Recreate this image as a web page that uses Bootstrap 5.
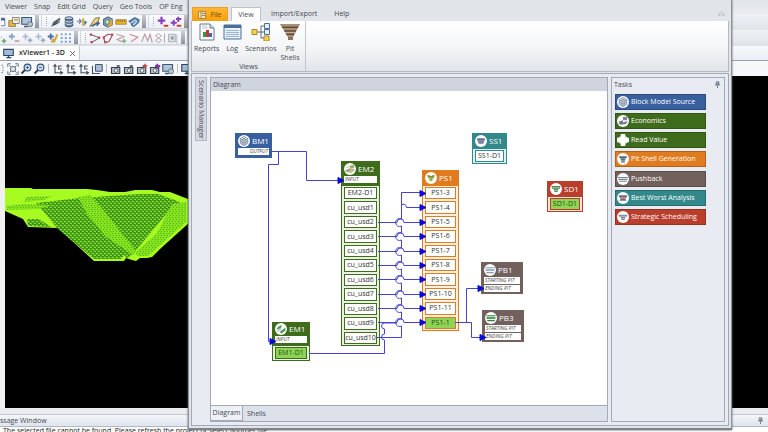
<!DOCTYPE html>
<html lang="en">
<head>
<meta charset="utf-8">
<meta name="viewport" content="width=device-width, initial-scale=1">
<title>Scenario diagram</title>
<link href="https://cdn.jsdelivr.net/npm/bootstrap@5.3.0/dist/css/bootstrap.min.css" rel="stylesheet">
<style>
:root { --line:#a3a9b8; --panel:#e8ebf1; --shell:#e1e4e8; }
body { font-family:"Open Sans","Noto Sans",sans-serif; font-size:7px; line-height:10px; color:#454a52; background:#fff; }
button { font:inherit; color:inherit; border:0; background:none; padding:0; white-space:nowrap; }
svg { display:block; flex:none; }
.desk { height:100vh; }

/* main application */
.menus { height:14px; background:linear-gradient(#e2e5e9,#eaecef); padding-left:5px; gap:7px; }
.strip { height:16px; background:linear-gradient(#f0f2f4,#dfe3e8); }
.tools { height:15px; padding:0 2px 0 1px; gap:1px; background:linear-gradient(#fbfcfd,#eceff4); border:1px solid #d3d7dd; border-left:0; }
.tools svg, .viewtools svg { width:12px; height:12px; }
.tools .cut, .viewtools .cut { width:6px; }
.grip { width:4px; height:100%; background:linear-gradient(#c9cdd3,#8e949d); margin-left:1px; }
.dots { width:3px; border-left:1px dotted #a3a9b3; height:9px; margin-left:3px; }
.filetabs { height:15px; background:linear-gradient(#f7f9fc,#e9eef5); border-bottom:1px solid #9ca2ab; }
.filetab { width:80px; background:#fff; border-right:1px solid #c4c9d2; color:#1c1f25; font-weight:600; padding-left:3px; gap:5px; }
.viewtools { height:15px; background:#f6f7f9; gap:1px; }
.bar { width:1px; height:9px; background:#b7bcc5; margin:0 2px; }
.scene { background:#000; border-left:5px solid #f0f0f0; padding-top:109px; }
.msghead { height:13px; margin-top:6px; background:linear-gradient(#f3f6fa,#dfe5ee); border-top:1px solid #c2c7cf; border-bottom:1px solid #b2b7c1; padding-right:4px; }
.msgs { height:5px; background:#fff; color:#222; line-height:7px; padding-left:3px; }
.under { background:#e9ebee; }

/* planning window */
.win { position:absolute; left:188px; right:36px; top:0; bottom:2px; background:var(--shell); border:1px solid #8d929c; border-top:0; border-bottom:2px solid #7f838b; box-shadow:0 0 2px #555; padding:7px 2px 2px; }
.rtabs { height:14px; padding-left:1px; }
.rtab { height:14px; text-align:center; }
.rfile { width:36px; background:linear-gradient(#ffb62e,#f99f0b); border:1px solid #e8a02a; border-bottom:0; gap:4px; color:#6a4a10; }
.rview { width:30px; background:#fff; border:1px solid #bcc1ca; border-bottom:0; margin-left:3px; }
.rplain { margin-left:10px; }
.rlast { margin-left:17px; }
.ribbon { height:51px; background:linear-gradient(#fff,#f5f6f8 50%,#e2e5e9); border:1px solid #b3b8c2; border-top:0; }
.rgroup { width:114px; border-right:1px solid #c3c8d0; padding-top:2px; }
.ritems { padding:0 5px 0 2px; }
.ritem { line-height:9px; }
.ritem svg { margin-bottom:3px; }
.work { background:var(--panel); border:1px solid var(--line); margin-top:1px; padding:3px; gap:3px; }
.sidetab { width:12px; height:64px; writing-mode:vertical-rl; background:#d5d9e2; border:1px solid #b0b6c2; text-align:center; line-height:10px; }
.pane { border:1px solid var(--line); }
.phead { height:13px; background:#cfd4de; padding:0 3px 0 2px; }
.board { background:#fff; position:relative; overflow:hidden; }
.btabs { height:16px; background:#dde1ea; border-top:1px solid var(--line); }
.btab { height:15px; width:32px; background:#eef0f5; border-right:1px solid var(--line); border-bottom:1px solid var(--line); }
.taskpane { width:114px; background:var(--panel); }
.taskpane .phead { background:transparent; }
.tasklist { width:91px; height:131px; margin:3px 0 0 3px; }
.task { height:16px; color:#fff; text-align:left; gap:2px; padding-left:1px; border:1px solid #0003; }
.task svg { width:12px; height:12px; }

.c-blue { --c:#38609f; --l:#dfe8f5; } .c-green { --c:#3f6b1c; --l:#e9f0df; } .c-orange { --c:#e07b20; --l:#fdf0e0; }
.c-brown { --c:#71605b; --l:#eee; } .c-teal { --c:#32888a; --l:#dff0f0; } .c-red { --c:#b93e2c; --l:#f6e1dd; }
.task, .node { background:var(--c); }

/* diagram nodes */
.node { position:absolute; color:#fff; font-size:8px; }
.ntitle { height:15px; padding-left:3px; gap:2px; }
.ntitle svg { width:12px; height:12px; }
.port { height:7px; margin:0 3px; background:#fff; color:#444; font-size:5px; line-height:7px; font-style:italic; padding:0 1px; }
.port + .port { margin-top:1px; }
.slots { background:var(--l); border:1px solid var(--c); padding:1px 2px; gap:2px; }
.port + .slots { margin-top:2px; }
.slot { flex:1 1 0; min-height:0; background:#fff; border:1px solid var(--c); color:#333; font-size:7px; line-height:10px; white-space:nowrap; display:flex; align-items:center; justify-content:center; }
.slot.on { background:#8dd455; color:#234d12; }
#bm1 { left:24px; top:42px; width:37px; height:25px; }
#em2 { left:130px; top:70px; width:39px; height:185px; }
#ps1 { left:211px; top:79px; width:37px; height:161px; }
#ss1 { left:261px; top:42px; width:35px; height:31px; }
#sd1 { left:336px; top:90px; width:36px; height:31px; }
#pb1 { left:270px; top:171px; width:42px; height:32px; }
#pb3 { left:271px; top:219px; width:42px; height:32px; }
#em1 { left:61px; top:231px; width:38px; height:39px; }
.wires { position:absolute; left:0; top:0; }
</style>
<script src="https://cdn.jsdelivr.net/npm/bootstrap@5.3.0/dist/js/bootstrap.bundle.min.js"></script>
</head>
<body class="overflow-hidden">
<svg width="0" height="0" class="position-absolute" aria-hidden="true">
  <defs>
    <g id="disc"><circle cx="8" cy="8" r="8" fill="#fff"/></g>
    <symbol id="i-block" viewBox="0 0 16 16"><use href="#disc"/><g fill="none" stroke="#78899f" stroke-width="1.2"><path d="M8 2l5 3v6l-5 3-5-3V5zM3 5l5 3 5-3M8 8v6M5.500 3.500l5 3v6M10.500 3.500l-5 3v6M3 8l5 3 5-3"/></g></symbol>
    <symbol id="i-eco" viewBox="0 0 16 16"><use href="#disc"/><path d="M1.500 9.500l6-2.500 2 2-5 4zM7 4l6-2 1 4-5 2z" fill="#a3ab74"/><path d="M6 11l6-3 2 1-5 4zM3 6l4-1" fill="#cfc894" stroke="#8a9760" stroke-width=".8"/></symbol>
    <symbol id="i-eco2" viewBox="0 0 16 16"><use href="#disc"/><path d="M2 9c1-4 4-6 7-6l-1 4zM6 12l8-6v4l-5 4z" fill="#4d9a59"/><path d="M3 11l5-3" stroke="#789"/></symbol>
    <symbol id="i-eco3" viewBox="0 0 16 16"><use href="#disc"/><path d="M8 2.500h5.500V7H8z" fill="#888097"/><path d="M2 9l6-2v3l6-2-2 4-8 1z" fill="#77758a"/></symbol>
    <symbol id="i-read" viewBox="0 0 16 16"><circle cx="8" cy="8" r="6.500" fill="#fff"/><path d="M5 0h6v16H5zM0 5h16v6H0z" fill="#fff"/><path d="M3 3l2 1M13 3l-2 1M3 13l2-1M13 13l-2-1" stroke="#3f6b1c"/></symbol>
    <symbol id="i-pit" viewBox="0 0 16 16"><use href="#disc"/><path d="M2.500 4h11l-3 5v4h-5V9z" fill="#85919b"/><path d="M3 6h10M5 8.500h6" stroke="#465a6d"/></symbol>
    <symbol id="i-pitg" viewBox="0 0 16 16"><use href="#disc"/><path d="M3 4h3l2 2 2-2h3l-1 4-2 1v3H6V9L4 8z" fill="#9dab48"/><path d="M4 6h8" stroke="#6e8634"/></symbol>
    <symbol id="i-push" viewBox="0 0 16 16"><use href="#disc"/><path d="M1 6h14M2 8.500h12M3 11h10" stroke="#76838e" stroke-width="1.400"/></symbol>
    <symbol id="i-pushg" viewBox="0 0 16 16"><use href="#disc"/><path d="M2 5h12M3 11.500h10" stroke="#46724c" stroke-width="1.500"/><path d="M2 6.500h12v3H2z" fill="#4ea458"/></symbol>
    <symbol id="i-pushb" viewBox="0 0 16 16"><use href="#disc"/><path d="M2 5h12M3 11.500h10" stroke="#8c9caf" stroke-width="1.500"/><path d="M2 6.500h12v3H2z" fill="#9fb6d2"/></symbol>
    <symbol id="i-best" viewBox="0 0 16 16"><use href="#disc"/><path d="M2.500 4h11v3l-2 1 1 4h-9l1-4-2-1z" fill="#8b96a2"/><path d="M3 6h10M5 10h6" stroke="#9c4240"/></symbol>
    <symbol id="i-bestg" viewBox="0 0 16 16"><use href="#disc"/><path d="M3 4h10v3l-2 5H5L3 7z" fill="#8b92ad"/><path d="M3 6h10M5 9h6" stroke="#5b648a"/></symbol>
    <symbol id="i-strat" viewBox="0 0 16 16"><use href="#disc"/><path d="M2 5h12l-1 3h-2l-1 4H6L5 8H3z" fill="#71808c"/><path d="M3 7h10M6 10h4" stroke="#dde"/></symbol>
    <symbol id="i-stratg" viewBox="0 0 16 16"><use href="#disc"/><path d="M2 4h12l-1 4h-2l-1 4H6L5 8H3z" fill="#518b50"/><path d="M3 6.500h10M6 10h4" stroke="#dde"/></symbol>

    <symbol id="t-form" viewBox="0 0 16 16"><path d="M1 3h12v10H1z" fill="#fff" stroke="#416090"/><path d="M1 3h12v3H1z" fill="#416090"/></symbol>
    <symbol id="t-folder" viewBox="0 0 16 16"><path d="M1 6h9v8H1z" fill="#e7b343" stroke="#8c7332"/><path d="M6 2h9v8H6z" fill="#e9edf1" stroke="#666"/><path d="M8 4h5v2H8z" fill="#d99c25"/></symbol>
    <symbol id="t-mon" viewBox="0 0 16 16"><path d="M1 2h14v9H1z" fill="#9ebbd8" stroke="#2c4661" stroke-width="1.500"/><path d="M5 14h7M8 11v3" stroke="#2c4661" stroke-width="2"/></symbol>
    <symbol id="t-mong" viewBox="0 0 16 16"><path d="M1 2h13v9H1z" fill="#aec6dd" stroke="#41566f" stroke-width="1.500"/><path d="M4 14h5" stroke="#41566f" stroke-width="2"/><circle cx="12" cy="11" r="3.500" fill="#b8c4ce" stroke="#536170"/></symbol>
    <symbol id="t-pen" viewBox="0 0 16 16"><path d="M2 14l2-6 9-6 1 3-5 6z" fill="#6b7783"/><path d="M2 14l8-8M5 12l8-4" stroke="#29323c"/></symbol>
    <symbol id="t-db" viewBox="0 0 16 16"><path d="M3 3v10c2 2 8 2 10 0V3z" fill="#5d7d9f" stroke="#263b54"/><ellipse cx="8" cy="3" rx="5" ry="2" fill="#bcd0e4" stroke="#263b54"/><path d="M3 6.500c2 2 8 2 10 0M3 10c2 2 8 2 10 0" fill="none" stroke="#e9f1f8"/></symbol>
    <symbol id="t-move" viewBox="0 0 16 16"><path d="M1 7h5M4 4l3 3-3 3" stroke="#6b7f97" stroke-width="1.500" fill="none"/><path d="M8 3h3v10H8z" fill="#dcb546"/><path d="M11 6l4 2-4 5z" fill="#4f74a6"/></symbol>
    <symbol id="t-edit" viewBox="0 0 16 16"><path d="M1 14l7-11 6-1-2 6z" fill="#f0d378" stroke="#5d5a4b"/><path d="M4 14l9-6M10 13l4-4" stroke="#3d5d8e" stroke-width="2"/></symbol>
    <symbol id="t-cube" viewBox="0 0 16 16"><path d="M8 1l6 3v8l-6 3-6-3V4z" fill="#789ac2" stroke="#344c6a"/><path d="M8 8l6-4v8l-6 3z" fill="#d7a83f"/><circle cx="7" cy="8" r="3" fill="#cfe0c2" stroke="#45753d"/></symbol>
    <symbol id="t-rule" viewBox="0 0 16 16"><path d="M1 5h14v6H1z" fill="#ebb52f" stroke="#9b772a"/><path d="M4 5v3M7 5v3M10 5v3M13 5v3" stroke="#7a5d20"/></symbol>
    <symbol id="t-surf" viewBox="0 0 16 16"><path d="M1 7l8-5 6 3-1 4-6 5-3-1-1-4z" fill="#5d88b8" stroke="#2c4a70"/><path d="M4 9l7-4M7 12l5-5" stroke="#cfe1f3" fill="none" stroke-width="1.500"/></symbol>
    <symbol id="t-plus" viewBox="0 0 16 16"><path d="M6 1v10M1 6h10" stroke="#8b3fc0" stroke-width="3"/><path d="M9 13h6" stroke="#d03030" stroke-width="2.500"/></symbol>
    <symbol id="t-plus2" viewBox="0 0 16 16"><path d="M5 5v8M1 9h8M11 1v7M8 4h7" stroke="#8b3fc0" stroke-width="2.500"/><path d="M9 13h6" stroke="#d03030" stroke-width="2.500"/></symbol>
    <symbol id="t-pg" viewBox="0 0 16 16"><path d="M5 3v8M1 7h8" stroke="#a9b7cc" stroke-width="2.500"/><path d="M12 9v6M9 12h6" stroke="#66a966" stroke-width="2"/></symbol>
    <symbol id="t-pr" viewBox="0 0 16 16"><path d="M5 2v8M1 6h8" stroke="#8fa2c2" stroke-width="2.500"/><path d="M9 12h6" stroke="#cf8d8d" stroke-width="2"/></symbol>
    <symbol id="t-pb" viewBox="0 0 16 16"><path d="M6 2v8M2 6h8" stroke="#a8b6cf" stroke-width="2"/><path d="M12 8v6M9 11h6" stroke="#9ba6b8" stroke-width="2"/></symbol>
    <symbol id="t-py" viewBox="0 0 16 16"><path d="M5 2v8M1 6h8" stroke="#4b6da7" stroke-width="2.500"/><path d="M9 14l5-11M6 14l3-5" stroke="#d3a63b" stroke-width="2.500"/></symbol>
    <symbol id="t-grid" viewBox="0 0 16 16"><path d="M1 3h14M1 8h14M1 13h14" stroke="#7f9fd0" stroke-width="2.500" stroke-dasharray="2.500 3"/></symbol>
    <symbol id="t-l1" viewBox="0 0 16 16"><path d="M2 3l12 5-11 6" fill="none" stroke="#6a5055" stroke-width="1.300"/><path d="M1 2h3v3H1zM12 6h3v3h-3zM2 12h3v3H2z" fill="#b64650"/></symbol>
    <symbol id="t-l2" viewBox="0 0 16 16"><path d="M2 7l6-4 6 1-5 9-5 1z" fill="none" stroke="#9a5259" stroke-width="1.500"/><path d="M1 6h3v3H1zM12 2h3v3h-3zM3 12h3v3H3z" fill="#c24b55"/></symbol>
    <symbol id="t-l3" viewBox="0 0 16 16"><path d="M2 3l10 3-9 4 6 3" fill="none" stroke="#c19da0" stroke-width="1.500"/><path d="M12 9v6M9 12h6" stroke="#83b183" stroke-width="2"/></symbol>
    <symbol id="t-l4" viewBox="0 0 16 16"><path d="M2 3l11 4-9 6" fill="none" stroke="#cf9096" stroke-width="1.700"/></symbol>
    <symbol id="t-l5" viewBox="0 0 16 16"><path d="M1 13L5 3l4 9 3-9 3 11" fill="none" stroke="#b99ea4" stroke-width="1.500"/></symbol>
    <symbol id="t-l6" viewBox="0 0 16 16"><path d="M2 5l4-3 4 3-4 3zM2 11l4-3 4 3-4 3zM14 2v12" fill="none" stroke="#b9a3aa" stroke-width="1.300"/></symbol>
    <symbol id="t-l7" viewBox="0 0 16 16"><path d="M2 3h9v10H2z" fill="#dde1e6" stroke="#9a9fa8"/><path d="M5 6h4v4H5z" fill="#999"/><path d="M13 3v12" stroke="#aaa"/></symbol>
    <symbol id="t-fit" viewBox="0 0 16 16"><path d="M1 5V1h4M11 1h4v4M15 11v4h-4M5 15H1v-4M3 3l10 10M13 3L3 13" fill="none" stroke="#6b7480" stroke-width="1.300"/><circle cx="8" cy="8" r="3.500" fill="#dbe4ed" stroke="#3f4a57"/></symbol>
    <symbol id="t-zoom" viewBox="0 0 16 16"><path d="M2 14l5-5" stroke="#34404e" stroke-width="2.500"/><circle cx="10" cy="6" r="4.500" fill="#c7dbee" stroke="#34506e" stroke-width="1.500"/><path d="M8 6h4M10 4v4" stroke="#34506e"/></symbol>
    <symbol id="t-zoomout" viewBox="0 0 16 16"><path d="M2 14l5-5" stroke="#34404e" stroke-width="2.500"/><circle cx="10" cy="6" r="4.500" fill="#c7dbee" stroke="#34506e" stroke-width="1.500"/><path d="M8 6h4" stroke="#34506e"/></symbol>
    <symbol id="t-axis" viewBox="0 0 16 16"><path d="M4 14V3M2 5l2-3 2 3M4 13h9M11 11l3 2-3 2M8 4h5M8 8h5M9 4v4" fill="none" stroke="#475361" stroke-width="1.500"/></symbol>
    <symbol id="t-axisb" viewBox="0 0 16 16"><path d="M6 2h9v9H6z" fill="#a9bfd6" stroke="#3f5268" stroke-width="1.300"/><path d="M2 4v10h10" fill="none" stroke="#3f5268" stroke-width="1.500"/></symbol>
    <symbol id="t-cam" viewBox="0 0 16 16"><path d="M2 6h11v8H2z" fill="#b8c3ce" stroke="#38424e" stroke-width="1.500"/><circle cx="8" cy="10" r="2.500" fill="#eff4f8" stroke="#38424e"/><path d="M9 4h4" stroke="#38424e" stroke-width="2"/></symbol>
    <symbol id="t-camr" viewBox="0 0 16 16"><use href="#t-cam"/><path d="M12 1v6M9 4h6" stroke="#cf4141" stroke-width="2"/></symbol>
    <symbol id="t-camp" viewBox="0 0 16 16"><use href="#t-cam"/><path d="M11 1v7M8 4h7" stroke="#8139a9" stroke-width="2.500"/></symbol>
    <symbol id="i-pin" viewBox="0 0 8 8"><path d="M2.500 1h3v3h-3zM1 4.500h6M4 5v3" fill="none" stroke="#6a7180"/><path d="M4 1h1.500v3H4z" fill="#6a7180"/></symbol>
    <pattern id="mesh" width="4" height="4" patternUnits="userSpaceOnUse"><path d="M0 0h4v4H0z" fill="#4ba31e"/><path d="M0 1h2v1H0zM2 3h2v1H2z" fill="#84e022"/><path d="M2 0h1v1H2zM0 3h1v1H0z" fill="#2f7d17"/></pattern>
    <pattern id="mesh2" width="3" height="4" patternUnits="userSpaceOnUse"><path d="M0 0h3v4H0z" fill="#86e41e"/><path d="M1 1h1v1H1zM2 3h1v1H2z" fill="#52ad1a"/></pattern>
  </defs>
</svg>

<div class="desk d-flex flex-column under">
  <nav class="menus d-flex align-items-center text-nowrap" aria-label="Application">
    <button>Viewer</button><button>Snap</button><button>Edit Grid</button><button>Query</button><button>Geo Tools</button><button>OP Eng</button>
  </nav>
  <div class="strip d-flex">
    <div class="tools d-flex align-items-center"><svg class="cut" viewBox="8 0 8 16"><use href="#t-form" width="16" height="16"/></svg><svg><use href="#t-folder"/></svg><svg><use href="#t-mong"/></svg><span class="grip"></span></div>
    <div class="tools d-flex align-items-center"><span class="dots"></span><svg><use href="#t-pen"/></svg><svg><use href="#t-db"/></svg><svg><use href="#t-move"/></svg><svg><use href="#t-edit"/></svg><svg><use href="#t-cube"/></svg><svg><use href="#t-rule"/></svg><svg><use href="#t-surf"/></svg><span class="grip"></span></div>
    <div class="tools d-flex align-items-center"><span class="dots"></span><svg><use href="#t-plus"/></svg><svg><use href="#t-plus2"/></svg><span class="grip"></span></div>
  </div>
  <div class="strip d-flex">
    <div class="tools d-flex align-items-center"><svg class="cut" viewBox="8 0 8 16"><use href="#t-pg" width="16" height="16"/></svg><svg><use href="#t-pr"/></svg><svg><use href="#t-pb"/></svg><svg><use href="#t-pb"/></svg><svg><use href="#t-py"/></svg><svg><use href="#t-grid"/></svg><span class="grip"></span></div>
    <div class="tools d-flex align-items-center"><span class="dots"></span><svg><use href="#t-l1"/></svg><svg><use href="#t-l2"/></svg><svg><use href="#t-l3"/></svg><svg><use href="#t-l4"/></svg><svg><use href="#t-l5"/></svg><svg><use href="#t-l6"/></svg><svg><use href="#t-l7"/></svg><span class="grip"></span></div>
  </div>
  <div class="filetabs d-flex">
    <button class="filetab d-flex align-items-center"><svg width="11" height="11"><use href="#t-mon"/></svg><span>xViewer1 - 3D</span><svg class="ms-auto me-1" width="5" height="5" viewBox="0 0 6 6"><path d="M0 0l6 6M6 0L0 6" stroke="#555"/></svg></button>
  </div>
  <div class="viewtools d-flex align-items-center">
    <svg class="cut" viewBox="8 0 8 16"><path d="M6 3h6v10H6" fill="none" stroke="#555" stroke-dasharray="2 2"/></svg><svg><use href="#t-fit"/></svg><svg><use href="#t-zoom"/></svg><svg><use href="#t-zoomout"/></svg><span class="bar"></span><svg><use href="#t-axis"/></svg><svg><use href="#t-axis"/></svg><svg><use href="#t-axis"/></svg><svg><use href="#t-axisb"/></svg><span class="bar"></span><svg><use href="#t-cam"/></svg><svg><use href="#t-cam"/></svg><svg><use href="#t-camr"/></svg><svg><use href="#t-camp"/></svg><svg><use href="#t-mong"/></svg><span class="bar"></span><svg><use href="#t-mon"/></svg>
  </div>
  <div class="scene flex-fill">
    <svg width="185" height="80" viewBox="5 185 185 80" role="img" aria-label="Pit surface">
      <path d="M5 188h26l2 1h54l10 1 13 2h15l10-2h17l8 2h10l18 7 2 1v22l-30 27-8 8-5 1h-7l-4 3-4-1-6-2-2 3H94L58 228l-30-1-5-8-18-8z" fill="#a8fb20"/>
      <path d="M36 203l44-5 60-4h18l22 8-12 10-31 37-4 5-6 4-3-3-3 4H94L58 229l-10-12z" fill="url(#mesh)"/>
      <path d="M27 219l12 0 12 8-23-1z" fill="url(#mesh)"/>
      <path d="M78 197l12-2 16 18 30 38-3 4-28-19-18-22z" fill="url(#mesh2)"/>
      <path d="M172 204l14-2v20l-30 27-8 7h-10l-3-3 22-20z" fill="url(#mesh2)"/>
      <path d="M6 206l17-2 30 1-14 4-32 1zM26 197l26-1-8 4-20 2z" fill="url(#mesh2)"/>
    </svg>
  </div>
  <div class="msghead d-flex align-items-center justify-content-between"><span>ssage Window</span><svg width="7" height="7"><use href="#i-pin"/></svg></div>
  <div class="msgs overflow-hidden text-nowrap">The selected file cannot be found. Please refresh the project or select another file.</div>
</div>

<main class="win d-flex flex-column">
  <div class="rtabs d-flex">
    <button class="rtab rfile d-flex align-items-center justify-content-center"><svg width="8" height="8" viewBox="0 0 8 8"><path d="M.5.5h7v7h-7z" fill="#f5e3b5" stroke="#a08a55"/><path d="M3 1v6M4 2.500h3M4 4.500h3" stroke="#a08a55"/></svg>File</button>
    <button class="rtab rview">View</button>
    <button class="rtab rplain">Import/Export</button>
    <button class="rtab rlast">Help</button>
    <svg class="ms-auto me-1 mt-1" width="7" height="6" viewBox="0 0 7 6"><path d="M1 3l2.500-2L6 3v2L3.500 3 1 5z" fill="#f4f5f7" stroke="#b5bac3"/></svg>
  </div>
  <div class="ribbon d-flex">
    <div class="rgroup d-flex flex-column">
      <div class="ritems d-flex flex-fill justify-content-between align-items-start">
        <button class="ritem d-flex flex-column align-items-center"><svg width="16" height="18" viewBox="0 0 16 18"><path d="M1 1h10l4 4v12H1z" fill="#fff" stroke="#66788c"/><path d="M11 1v4h4" fill="#d5dee7" stroke="#66788c"/><path d="M3 5h6M3 3h5" stroke="#b5c1cd"/><path d="M4 9h3v5H4z" fill="#2e9a45"/><path d="M7 7h3v7H7z" fill="#cf3333"/><path d="M10 10h3v4h-3z" fill="#3d68b5"/></svg>Reports</button>
        <button class="ritem d-flex flex-column align-items-center"><svg width="19" height="18" viewBox="0 0 19 18"><path d="M1 2h17v14H1z" fill="#e9f1f9" stroke="#4b6e9b"/><path d="M1 2h17v3H1z" fill="#4b6e9b"/><path d="M3 7.500h13M3 9.500h13M3 11.500h13M3 13.500h13" stroke="#9ab3d0"/></svg>Log</button>
        <button class="ritem d-flex flex-column align-items-center"><svg width="20" height="18" viewBox="0 0 20 18"><path d="M6 9h7M10 3v12M10 3h4M10 15h4" fill="none" stroke="#5a6b80"/><path d="M1 6.500h5v5H1zM13 13h5v5h-5z" fill="#f6d440" stroke="#a8892c"/><path d="M13.500.5h5v5h-5zM13.500 6.500h5v5h-5z" fill="#e7eff8" stroke="#4e6f9c"/></svg>Scenarios</button>
        <button class="ritem d-flex flex-column align-items-center"><svg width="20" height="18" viewBox="0 0 20 18"><path d="M0 1h20l-7 13v3H8v-3z" fill="#8c735b"/><path d="M1 2h18M3 6h14M5 9.500h10M7 13h6" stroke="#c4ad92" stroke-width="1.200"/><path d="M2 4.500h16M4 8h12M6 11.500h8" stroke="#5c4938"/></svg>Pit<br>Shells</button>
      </div>
      <div class="text-center">Views</div>
    </div>
  </div>
  <div class="work d-flex flex-fill">
    <button class="sidetab">Scenario Manager</button>
    <section class="pane d-flex flex-column flex-fill">
      <div class="phead d-flex align-items-center">Diagram</div>
      <div class="board flex-fill">
        <div class="node c-blue" id="bm1"><div class="ntitle d-flex align-items-center"><svg><use href="#i-block"/></svg>BM1</div><div class="port text-end">OUTPUT</div></div>
        <div class="node c-green d-flex flex-column" id="em2"><div class="ntitle d-flex align-items-center"><svg><use href="#i-eco"/></svg>EM2</div><div class="port">INPUT</div>
          <div class="slots d-flex flex-column flex-fill"><div class="slot">EM2-D1</div><div class="slot">cu_usd1</div><div class="slot">cu_usd2</div><div class="slot">cu_usd3</div><div class="slot">cu_usd4</div><div class="slot">cu_usd5</div><div class="slot">cu_usd6</div><div class="slot">cu_usd7</div><div class="slot">cu_usd8</div><div class="slot">cu_usd9</div><div class="slot">cu_usd10</div></div></div>
        <div class="node c-orange d-flex flex-column" id="ps1"><div class="ntitle d-flex align-items-center"><svg><use href="#i-pitg"/></svg>PS1</div>
          <div class="slots d-flex flex-column flex-fill"><div class="slot">PS1-3</div><div class="slot">PS1-4</div><div class="slot">PS1-5</div><div class="slot">PS1-6</div><div class="slot">PS1-7</div><div class="slot">PS1-8</div><div class="slot">PS1-9</div><div class="slot">PS1-10</div><div class="slot">PS1-11</div><div class="slot on">PS1-1</div></div></div>
        <div class="node c-teal d-flex flex-column" id="ss1"><div class="ntitle d-flex align-items-center"><svg><use href="#i-bestg"/></svg>SS1</div><div class="slots d-flex flex-fill"><div class="slot">SS1-D1</div></div></div>
        <div class="node c-red d-flex flex-column" id="sd1"><div class="ntitle d-flex align-items-center"><svg><use href="#i-stratg"/></svg>SD1</div><div class="slots d-flex flex-fill"><div class="slot on">SD1-D1</div></div></div>
        <div class="node c-brown" id="pb1"><div class="ntitle d-flex align-items-center"><svg><use href="#i-pushb"/></svg>PB1</div><div class="port">STARTING PIT</div><div class="port">ENDING PIT</div></div>
        <div class="node c-brown" id="pb3"><div class="ntitle d-flex align-items-center"><svg><use href="#i-pushg"/></svg>PB3</div><div class="port">STARTING PIT</div><div class="port">ENDING PIT</div></div>
        <div class="node c-green d-flex flex-column" id="em1"><div class="ntitle d-flex align-items-center"><svg><use href="#i-eco2"/></svg>EM1</div><div class="port">INPUT</div><div class="slots d-flex flex-fill"><div class="slot on">EM1-D1</div></div></div>
        <svg class="wires" id="wires" width="398" height="315" viewBox="211 91 398 315" fill="none" stroke="#4444d0"></svg>
      </div>
      <div class="btabs d-flex"><button class="btab">Diagram</button><button class="px-1">Shells</button></div>
    </section>
    <aside class="pane taskpane">
      <div class="phead d-flex align-items-center justify-content-between"><span>Tasks</span><svg width="7" height="7"><use href="#i-pin"/></svg></div>
      <div class="tasklist d-flex flex-column justify-content-between">
        <button class="task c-blue d-flex align-items-center"><svg><use href="#i-block"/></svg>Block Model Source</button>
        <button class="task c-green d-flex align-items-center"><svg><use href="#i-eco3"/></svg>Economics</button>
        <button class="task c-green d-flex align-items-center"><svg><use href="#i-read"/></svg>Read Value</button>
        <button class="task c-orange d-flex align-items-center"><svg><use href="#i-pit"/></svg>Pit Shell Generation</button>
        <button class="task c-brown d-flex align-items-center"><svg><use href="#i-push"/></svg>Pushback</button>
        <button class="task c-teal d-flex align-items-center"><svg><use href="#i-best"/></svg>Best Worst Analysis</button>
        <button class="task c-red d-flex align-items-center"><svg><use href="#i-strat"/></svg>Strategic Scheduling</button>
      </div>
    </aside>
  </div>
</main>
<script>
// Connector lines: each row wire hops over the shared riser between EM2 and PS1.
const rows = [222, 236, 251, 265, 279, 294, 308, 322];
const tips = [[344,180],[276,341],[426,193],[426,207],[484,288],[486,337]].concat(rows.map(y => [426, y]));
let d = 'M272 151.500H306.500V180.500H340M272 151.500H278.500V164.500H268.500V341.500H272'
  + 'M309 353.500H384.500V340a3 3 0 0 1 0 -6V329a3 3 0 0 1 0 -6H397M401.500 205a3 3 0 0 1 5 2.500H422'
  + 'M455 322.500H466.500V288.500H480M466 322.500H471.500V337.500H482M377 337.500H401.500';
[...rows].reverse().forEach(y => { d += `V${y + 4}a4 4 0 1 1 0 -7`; });
d += 'V192.500H422';
rows.forEach(y => { d += `M378 ${y}.5H397a3.500 3.500 0 0 1 7 0H422`; });
document.getElementById('wires').innerHTML = `<path d="${d}"/>`
  + tips.map(([x, y]) => `<path d="M${x} ${y + .5}l-6 -3v6z" fill="#0808d8" stroke="#0808d8" stroke-width="1"/>`).join('');
</script>
</body>
</html>
